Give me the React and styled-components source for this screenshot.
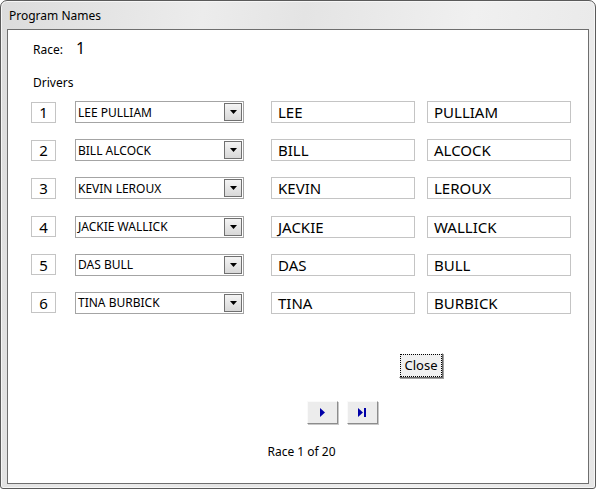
import React from "react";
import styled, { createGlobalStyle } from "styled-components";

const Global = createGlobalStyle`
  html, body { margin: 0; padding: 0; background: #ffffff; }
  body { font-family: "Noto Sans", "Open Sans", sans-serif; }
`;

const Frame = styled.div`
  box-sizing: border-box;
  width: 596px;
  height: 489px;
  display: flex;
  flex-direction: column;
  border: 1px solid #5a5a5a;
  border-radius: 7px 7px 3px 3px;
  background: linear-gradient(100deg, #dcdcdc 0%, #ececec 30%, #e4e4e4 45%, #f0f0f0 70%, #e6e6e6 100%);
  box-shadow: inset 0 0 0 1px #f6f6f6;
  overflow: hidden;
`;

const TitleBar = styled.div`
  height: 28px;
  display: flex;
  align-items: center;
  padding-left: 8px;
  font-size: 12px;
  color: #000;
`;

const Client = styled.div`
  flex: 1;
  margin: 0 6px 4px 6px;
  background: #fff;
  border: 1px solid #6e6e6e;
  display: flex;
  flex-direction: column;
  padding: 7px 0 0 23px;
`;

const RaceLine = styled.div`
  display: flex;
  align-items: baseline;
  gap: 13px;
  padding-left: 2px;
  height: 20px;
`;

const Label = styled.span`
  font-size: 12px;
  color: #000;
`;

const RaceNum = styled.span`
  font-size: 16px;
  color: #000;
`;

const DriversLabel = styled.div`
  font-size: 12px;
  padding-left: 2px;
  margin-top: 17px;
  height: 18px;
`;

const Grid = styled.div`
  margin-top: 9px;
  display: grid;
  grid-template-columns: 44px 196px 156px 144px;
  row-gap: 16.2px;
  align-items: center;
`;

const NumBox = styled.div`
  box-sizing: border-box;
  width: 25px;
  height: 21px;
  border: 1px solid #c4c4c4;
  display: flex;
  align-items: center;
  justify-content: center;
  font-size: 15px;
`;

const Combo = styled.div`
  box-sizing: border-box;
  width: 169px;
  height: 22px;
  border: 1px solid #a4a4a4;
  display: flex;
  align-items: center;
  padding: 0 1px 0 2px;
`;

const ComboText = styled.span`
  flex: 1;
  font-size: 12px;
  white-space: nowrap;
`;

const ComboBtn = styled.div`
  box-sizing: border-box;
  width: 18px;
  height: 18px;
  border: 1px solid #707070;
  background: linear-gradient(#f4f4f4, #d8d8d8);
  display: flex;
  align-items: center;
  justify-content: center;
`;

const TextBox = styled.div`
  box-sizing: border-box;
  width: 144px;
  height: 22px;
  border: 1px solid #c4c4c4;
  display: flex;
  align-items: center;
  padding-left: 6px;
  font-size: 15px;
  white-space: nowrap;
`;

const CloseRow = styled.div`
  margin-top: 39px;
  display: flex;
  padding-left: 368px;
`;

const CloseButton = styled.button`
  box-sizing: border-box;
  width: 44px;
  height: 25px;
  padding: 0;
  background: #f0f0f0;
  border: 1px solid;
  border-color: #ffffff #696969 #696969 #ffffff;
  box-shadow: 1px 1px 0 #a0a0a0;
  outline: 1px dotted #000;
  outline-offset: -2px;
  font-family: "Noto Sans", sans-serif;
  font-size: 13px;
  color: #000;
`;

const NavRow = styled.div`
  margin-top: 23px;
  display: flex;
  gap: 9px;
  padding-left: 276px;
`;

const NavButton = styled.button`
  box-sizing: border-box;
  width: 31px;
  height: 23px;
  padding: 0;
  background: #ececec;
  border: 1px solid;
  border-color: #fafafa #8c8c8c #8c8c8c #fafafa;
  box-shadow: 1px 1px 0 #c8c8c8;
  display: flex;
  align-items: center;
  justify-content: center;
`;

const Status = styled.div`
  margin-top: 19px;
  font-size: 12px;
  text-align: center;
  padding-right: 16px;
`;

const drivers = [
  ["LEE", "PULLIAM"],
  ["BILL", "ALCOCK"],
  ["KEVIN", "LEROUX"],
  ["JACKIE", "WALLICK"],
  ["DAS", "BULL"],
  ["TINA", "BURBICK"],
];

const Arrow = () => (
  <svg width="7" height="4" viewBox="0 0 7 4">
    <path d="M0 0H7L3.5 4Z" fill="#000" />
  </svg>
);

const PlayIcon = () => (
  <svg width="5" height="9" viewBox="0 0 5 9">
    <path d="M0 0L5 4.5L0 9Z" fill="#0000a8" />
  </svg>
);

const EndIcon = () => (
  <svg width="9" height="9" viewBox="0 0 9 9">
    <path d="M0 0L5 4.5L0 9Z" fill="#0000a8" />
    <rect x="6" y="0" width="2" height="9" fill="#0000a8" />
  </svg>
);

export default function App() {
  return (
    <>
      <Global />
      <Frame>
        <TitleBar>Program Names</TitleBar>
        <Client>
          <RaceLine>
            <Label>Race:</Label>
            <RaceNum>1</RaceNum>
          </RaceLine>
          <DriversLabel>Drivers</DriversLabel>
          <Grid>
            {drivers.map(([first, last], i) => (
              <React.Fragment key={i}>
                <NumBox>{i + 1}</NumBox>
                <Combo>
                  <ComboText>{first} {last}</ComboText>
                  <ComboBtn><Arrow /></ComboBtn>
                </Combo>
                <TextBox>{first}</TextBox>
                <TextBox>{last}</TextBox>
              </React.Fragment>
            ))}
          </Grid>
          <CloseRow>
            <CloseButton>Close</CloseButton>
          </CloseRow>
          <NavRow>
            <NavButton><PlayIcon /></NavButton>
            <NavButton><EndIcon /></NavButton>
          </NavRow>
          <Status>Race 1 of 20</Status>
        </Client>
      </Frame>
    </>
  );
}
